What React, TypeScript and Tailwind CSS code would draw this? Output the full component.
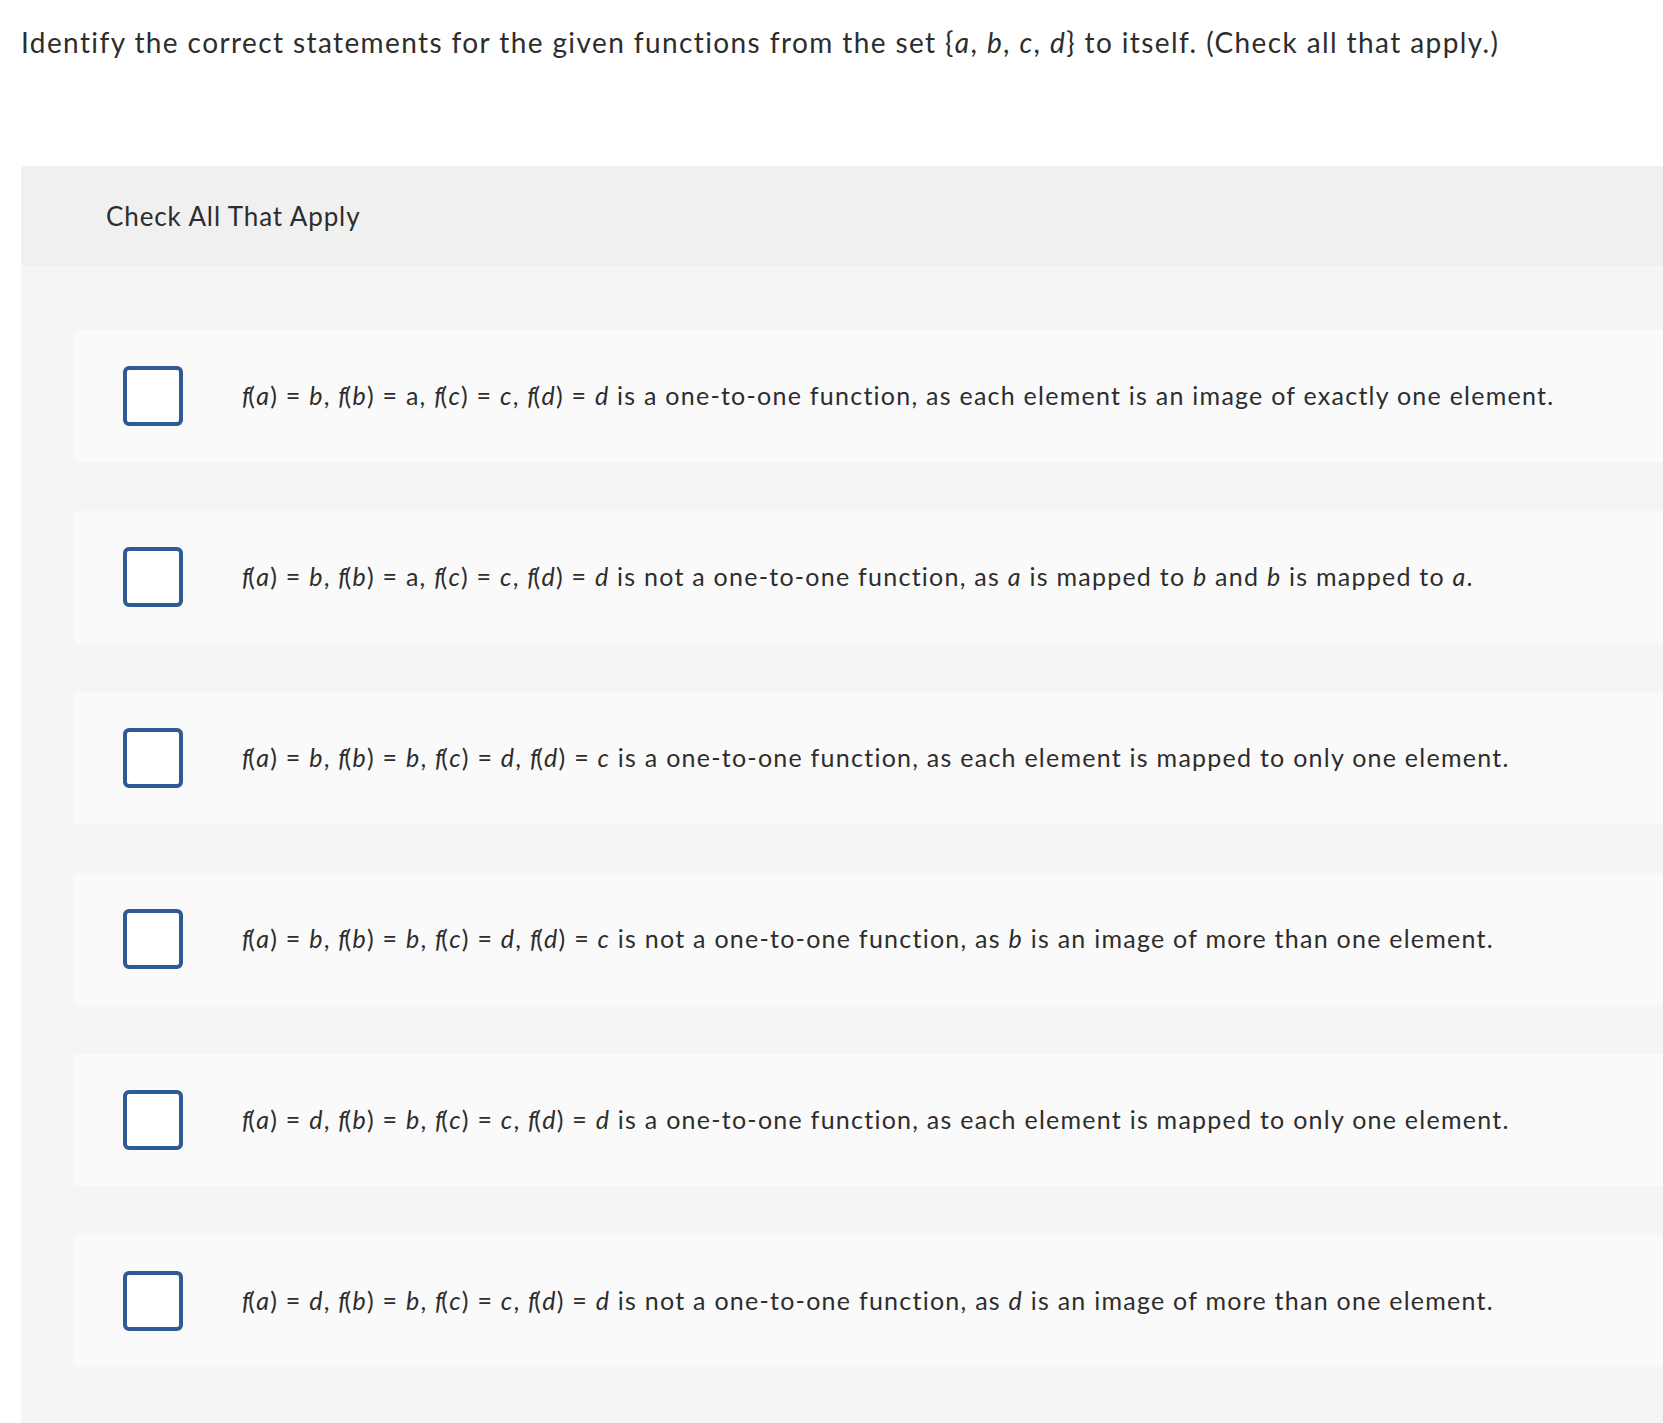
import React from "react";

const font = { fontFamily: "Lato, 'Open Sans', Arial, sans-serif" };

function V({ children }: { children: React.ReactNode }) {
  return <i className="italic">{children}</i>;
}

function F({ v }: { v: string }) {
  return (
    <>
      <i className="italic mr-[-3px]">f</i>(<V>{v}</V>)
    </>
  );
}

const rows: React.ReactNode[] = [
  <>
    <F v="a" /> = <V>b</V>, <F v="b" /> = a, <F v="c" /> = <V>c</V>, <F v="d" /> = <V>d</V> is a one-to-one function, as each element is an image of exactly one element.
  </>,
  <>
    <F v="a" /> = <V>b</V>, <F v="b" /> = a, <F v="c" /> = <V>c</V>, <F v="d" /> = <V>d</V> is not a one-to-one function, as <V>a</V> is mapped to <V>b</V> and <V>b</V> is mapped to <V>a</V>.
  </>,
  <>
    <F v="a" /> = <V>b</V>, <F v="b" /> = <V>b</V>, <F v="c" /> = <V>d</V>, <F v="d" /> = <V>c</V> is a one-to-one function, as each element is mapped to only one element.
  </>,
  <>
    <F v="a" /> = <V>b</V>, <F v="b" /> = <V>b</V>, <F v="c" /> = <V>d</V>, <F v="d" /> = <V>c</V> is not a one-to-one function, as <V>b</V> is an image of more than one element.
  </>,
  <>
    <F v="a" /> = <V>d</V>, <F v="b" /> = <V>b</V>, <F v="c" /> = <V>c</V>, <F v="d" /> = <V>d</V> is a one-to-one function, as each element is mapped to only one element.
  </>,
  <>
    <F v="a" /> = <V>d</V>, <F v="b" /> = <V>b</V>, <F v="c" /> = <V>c</V>, <F v="d" /> = <V>d</V> is not a one-to-one function, as <V>d</V> is an image of more than one element.
  </>,
];

export default function App() {
  return (
    <main className="min-h-[1423px] bg-white text-[#2d2d2d] overflow-hidden" style={font}>
      <h1 className="pl-[21px] pt-[26px] text-[28px] leading-[32px] font-normal tracking-[1.4px] whitespace-nowrap">
        Identify the correct statements for the given functions from the set {"{"}<V>a</V>, <V>b</V>, <V>c</V>, <V>d</V>{"}"} to itself. (Check all that apply.)
      </h1>

      <section className="ml-[21px] mt-[108px] rounded-tl-[4px] overflow-hidden">
        <div className="h-[100px] bg-[#f0f0f0] flex items-center pl-[85px] text-[26px] tracking-[0.9px]">
          Check All That Apply
        </div>
        <div className="bg-[#f5f5f5] pl-[52px] pt-[64px] pb-[56px] flex flex-col gap-[49px]">
          {rows.map((r, i) => (
            <label key={i} className="h-[132px] bg-[#fafafa] rounded-l-[6px] flex items-center pl-[50px] cursor-pointer">
              <span className="w-[60px] h-[60px] shrink-0 bg-white border-[4px] border-[#2f5a93] rounded-[6px]" />
              <span className="pl-[59px] text-[25px] tracking-[1.25px] whitespace-nowrap">{r}</span>
            </label>
          ))}
        </div>
      </section>
    </main>
  );
}
